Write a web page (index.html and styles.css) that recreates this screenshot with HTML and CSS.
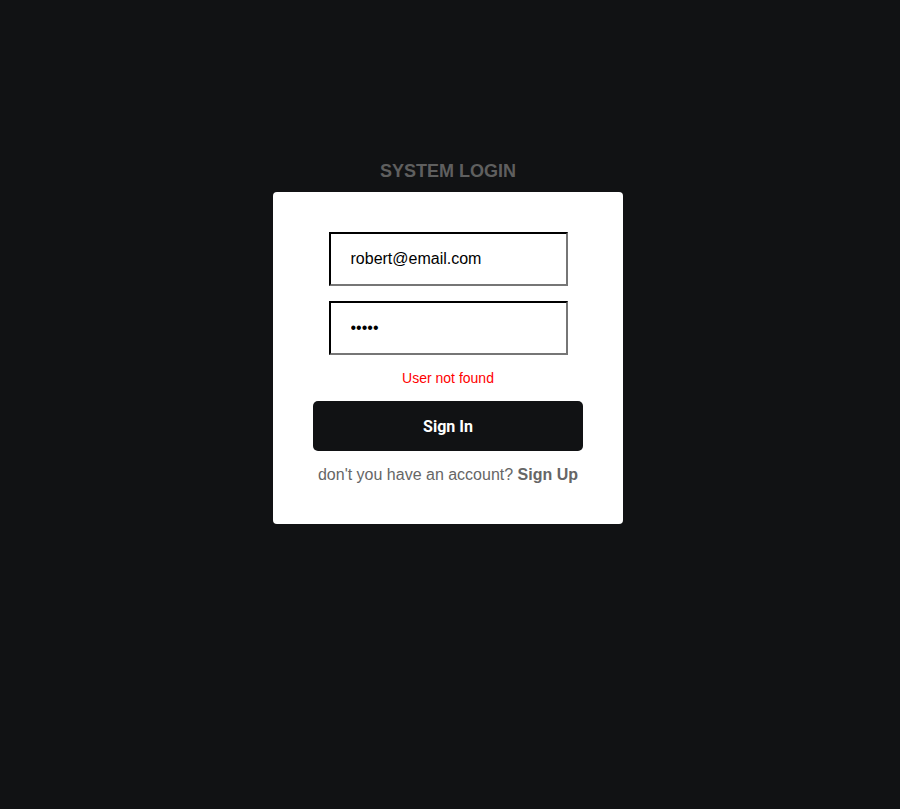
FILE: index.html
```html
<!DOCTYPE html>
<html lang="en">
<head>
<meta charset="utf-8">
<title>System Login</title>
<link rel="stylesheet" href="styles.css">
</head>
<body>
<main class="page">
  <h1 class="title">SYSTEM LOGIN</h1>
  <form class="card">
    <input class="field" type="email" value="robert@email.com">
    <input class="field" type="password" value="12345">
    <p class="error">User not found</p>
    <button class="btn" type="button">Sign In</button>
    <p class="signup">don't you have an account? <a class="signup-link" href="#">Sign Up</a></p>
  </form>
</main>
</body>
</html>
```

FILE: styles.css
```css
html, body {
  margin: 0;
  padding: 0;
  background: #111214;
  height: 100%;
}
body {
  font-family: "Liberation Sans", Arial, sans-serif;
}
.page {
  display: flex;
  flex-direction: column;
  align-items: center;
  padding-top: 160px;
  padding-right: 4px;
}
.title {
  margin: 0 0 10px;
  font-size: 18px;
  line-height: 22px;
  font-weight: bold;
  color: #5f5f5f;
}
.card {
  box-sizing: border-box;
  width: 350px;
  background: #fff;
  border-radius: 4px;
  padding: 40px 40px 40px;
  display: flex;
  flex-direction: column;
  align-items: center;
}
.field {
  box-sizing: border-box;
  width: 239px;
  height: 54px;
  margin: 0 0 15px;
  padding: 0 20px;
  border: 2px inset #767676;
  border-top-color: #222;
  border-left-color: #222;
  border-bottom-color: #767676;
  border-right-color: #767676;
  font-family: "Liberation Sans", Arial, sans-serif;
  font-size: 16px;
  color: #000;
  background: #fff;
  outline: none;
}
.field + .field {
  margin-bottom: 15px;
}
.error {
  margin: 0 0 14px;
  font-size: 14px;
  line-height: 17px;
  color: #ff0000;
}
.btn {
  width: 270px;
  height: 50px;
  border: 0;
  border-radius: 5px;
  background: #111214;
  color: #fff;
  font-family: Roboto, "Liberation Sans", sans-serif;
  font-weight: bold;
  font-size: 16px;
  cursor: pointer;
}
.signup {
  margin: 15px 0 0;
  font-size: 16px;
  line-height: 18px;
  color: #666;
}
.signup-link {
  color: #666;
  font-weight: bold;
  text-decoration: none;
}
```
